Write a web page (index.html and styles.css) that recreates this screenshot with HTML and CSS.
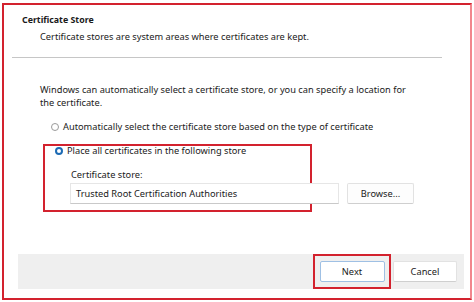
FILE: index.html
```html
<!DOCTYPE html>
<html>
<head>
<meta charset="utf-8">
<link rel="stylesheet" href="styles.css">
</head>
<body>
<div class="frame">
  <div class="header">
    <div class="title">Certificate Store</div>
    <div class="desc">Certificate stores are system areas where certificates are kept.</div>
  </div>
  <div class="sep"></div>
  <div class="content">
    <p class="intro">Windows can automatically select a certificate store, or you can specify a location for the certificate.</p>
    <div class="option auto"><span class="radio"></span>Automatically select the certificate store based on the type of certificate</div>
    <div class="store-row">
      <div class="highlight">
        <div class="option place"><span class="radio on"></span>Place all certificates in the following store</div>
        <div class="store-label">Certificate store:</div>
      </div>
    </div>
    <div class="input-row">
      <div class="input">Trusted Root Certification Authorities</div>
      <div class="btn browse">Browse...</div>
    </div>
  </div>
  <div class="footer">
    <div class="next-mark"><div class="btn next">Next</div></div>
    <div class="btn cancel">Cancel</div>
  </div>
</div>
</body>
</html>
```
FILE: styles.css
```css
* { box-sizing: border-box; }
html, body { margin: 0; padding: 0; background: #fff; }
body {
  font-family: "Noto Sans", "Open Sans", sans-serif;
  font-size: 9.25px;
  color: #1a1a1a;
  width: 474px;
  height: 302px;
  overflow: hidden;
}
.frame {
  margin: 3px 0 0 2px;
  width: 470px;
  height: 297px;
  border: 2px solid #d3222e;
  border-right-color: #f2868d;
  display: flex;
  flex-direction: column;
  position: relative;
}
.header { padding: 8px 0 0 18px; height: 52px; }
.title { font-weight: bold; line-height: 14px; font-size: 8.8px; }
.desc { padding-left: 18px; line-height: 14px; margin-top: 3px; }
.sep { margin-left: 8px; width: 430px; height: 1px; background: #c6c6c6; }
.content { position: relative; padding-left: 36px; }
.intro { margin: 25px 0 0; line-height: 13px; width: 372px; }
.option { display: flex; align-items: center; line-height: 14px; }
.auto { margin-top: 11px; padding-left: 11px; color: #222; }
.radio {
  width: 8px; height: 8px; border-radius: 50%;
  border: 1px solid #9a9a9a; margin-right: 4px; flex: none;
}
.radio.on { border: 2.5px solid #1d6bb4; background: #fff; }
.store-row { margin-top: 10px; margin-left: 3px; }
.highlight {
  width: 269px; height: 68px;
  border: 2px solid #d3222e;
  padding: 0 0 0 10px;
}
.place { margin-top: -2px; }
.store-label { margin: 10px 0 0 16px; line-height: 14px; }
.input-row {
  display: flex; gap: 8px;
  margin: -29px 0 0 30px;
  position: relative;
}
.input {
  width: 269px; height: 21px;
  border: 1px solid #e6e6e6; border-bottom-color: #c9c9c9;
  background: #fff;
  padding-left: 5px; line-height: 19px;
}
.btn {
  height: 21px; line-height: 19px; text-align: center;
  border: 1px solid #e2e2e2; border-bottom-color: #cfcfcf;
  background: #fdfdfd; border-radius: 2px;
}
.browse { width: 67px; }
.footer {
  margin: auto 0 9px 14px;
  width: 446px; height: 35px;
  background: #efefef;
  display: flex; align-items: center; justify-content: flex-end;
  padding-right: 7px; gap: 2px;
}
.next-mark {
  border: 2px solid #d3222e;
  height: 35px; width: 78px;
  display: flex; align-items: center; justify-content: center;
}
.next { width: 65px; border-color: #9fc0e4; background: #fff; }
.cancel { width: 64px; background: #fff; }
```
